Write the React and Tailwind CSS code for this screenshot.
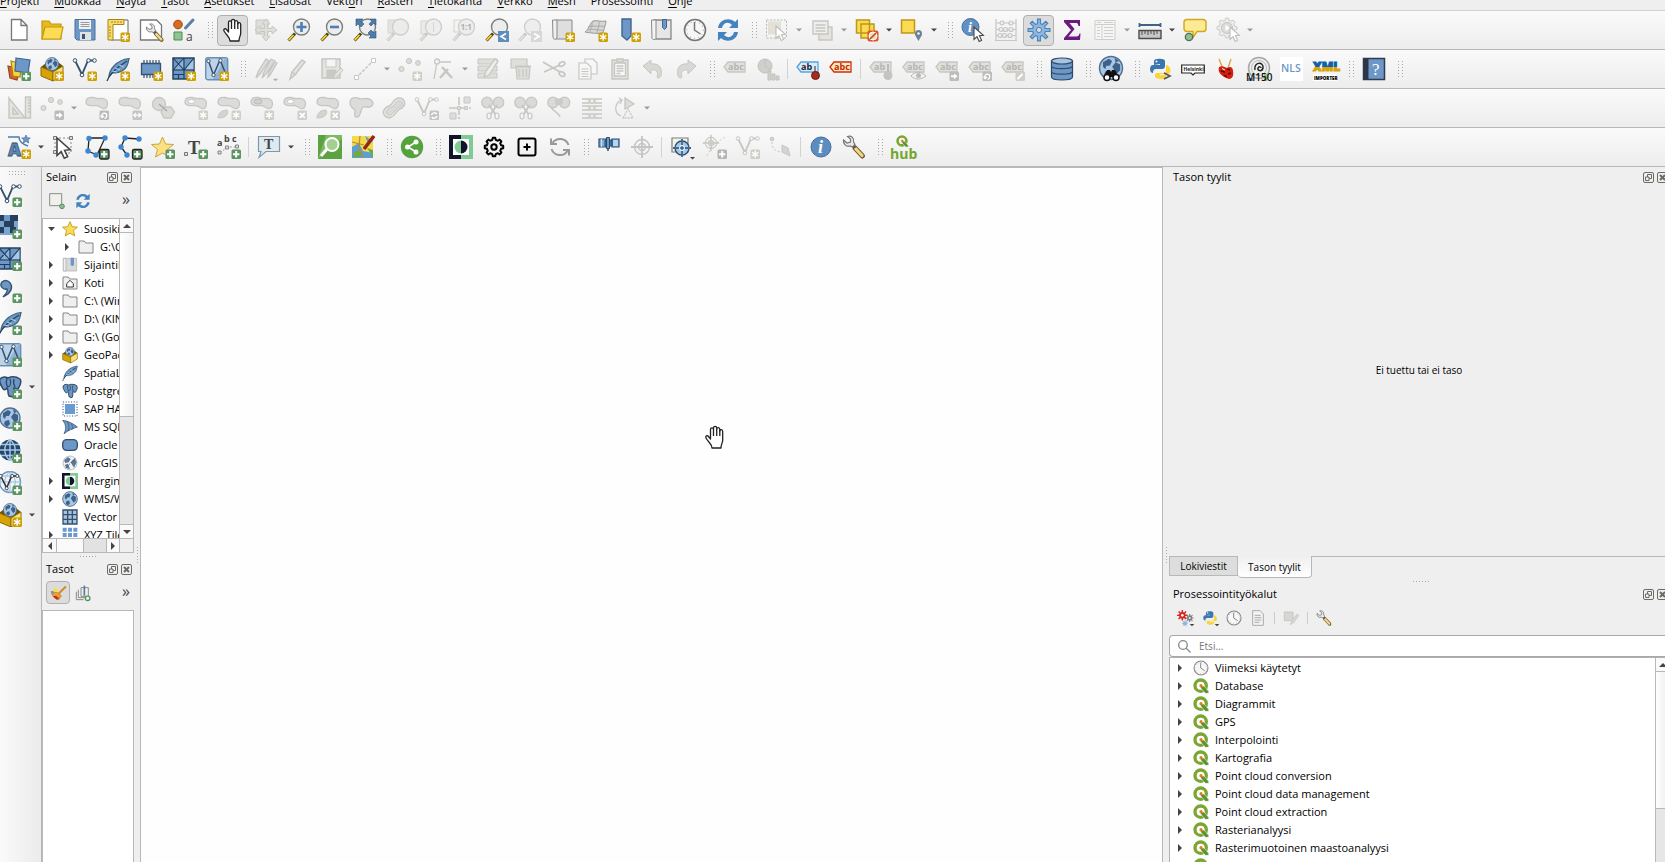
const BLUE = '#6c97c6'
const NAVY = '#33506e'
const OFF = '#c6c6c2'
const OFF_FILL = '#dfdedb'

function gearPath(cx, cy, teeth, outer, inner) {
  const pts = []
  for (let i = 0; i < teeth; i++) {
    const step = (Math.PI * 2) / teeth
    const a = i * step - Math.PI / 2
    const at = (r, o) => `${(cx + r * Math.cos(a + o * step)).toFixed(2)} ${(cy + r * Math.sin(a + o * step)).toFixed(2)}`
    pts.push(at(inner, -0.3), at(outer, -0.17), at(outer, 0.17), at(inner, 0.3))
  }
  return `M${pts.join('L')}Z`
}

/* ---------- badges ---------- */

function Badge({ fill, children }) {
  return (
    <g>
      <rect x="14.5" y="14.5" width="9.5" height="9.5" rx="1.5" fill={fill} />
      {children}
    </g>
  )
}

const Plus = ({ off }) => (
  <Badge fill={off ? '#b5b5b2' : '#5a9460'}>
    <path d="M19.2 16v6.4M16 19.2h6.4" stroke="#fff" strokeWidth="2" />
  </Badge>
)

const Star = ({ off }) => (
  <Badge fill={off ? '#cfcec6' : '#cf9f06'}>
    <path d="M19.2 15.6v7.2M16 17.4l6.4 3.6M16 21l6.4-3.6" stroke="#fff" strokeWidth="1.4" />
  </Badge>
)

const Arrow = () => (
  <Badge fill="#bcbcba">
    <path d="M16 18.3h3v-2l3.6 3-3.6 3v-2h-3z" fill="#fff" />
  </Badge>
)

const Turn = () => (
  <Badge fill="#bcbcba">
    <path d="M19.6 22.4c3-1 2.8-5 0-5.2-2.4 0-2.8 2-2.6 3.2M15.6 19.6l1.5 2 1.8-1.6" stroke="#fff" strokeWidth="1.3" fill="none" />
  </Badge>
)

const Cross = () => (
  <Badge fill="#cfcec9">
    <path d="M16.8 16.8l5 5M21.8 16.8l-5 5" stroke="#fff" strokeWidth="1.8" />
  </Badge>
)

/* ---------- shared shapes ---------- */

function Lens({ off, fill = '#ededed' }) {
  return (
    <g>
      <path d="M1.5 22.5L8 15.5" stroke={off ? OFF : '#4d4015'} strokeWidth="3" />
      <path d="M1.7 22.2L6.5 17" stroke={off ? '#e2dfd6' : '#f8d22a'} strokeWidth="1.8" />
      <circle cx="14.5" cy="9" r="8" fill={fill} stroke={off ? '#cfcfcd' : '#7b8079'} strokeWidth="1.4" />
    </g>
  )
}

const Blob = () => (
  <path
    d="M1 6C1 2 4 1 8 1.500c3 .5 4 1.500 7 1 4-.5 7.500 1 7.500 5s-2 5.500-4.500 5c-3-1-4-3-7-3S1 10.500 1 6z"
    fill="#dcdddb"
    stroke={OFF}
    strokeWidth="1.3"
  />
)

const Pointer = ({ x = 0, y = 0, off }) => (
  <path
    transform={`translate(${x} ${y})`}
    d="M0 0v12.5l3-2.8 2.2 4.8 2.4-1.2-2.2-4.5 4-.4z"
    fill="#fff"
    stroke={off ? '#bdbdba' : '#444'}
    strokeWidth="1.1"
  />
)

const Wrench = ({ x = 0, y = 0 }) => (
  <g transform={`translate(${x} ${y})`}>
    <path d="M12 13l7.500 8" stroke="#6c5b2b" strokeWidth="5" strokeLinecap="round" />
    <path d="M12.500 13.500l6.500 7" stroke="#f5d488" strokeWidth="3.2" strokeLinecap="round" />
    <path d="M10 10l2 3" stroke="#555" strokeWidth="3" />
    <path d="M4.5 1.500c4-1.500 7 2 6 5.500l1.5 2.500-2.5 2.500L7 11C3 12 0 9 .5 5l3.500 3L7.500 7 7.500 4z" fill="#e9e9e9" stroke="#777" strokeWidth="1.200" />
  </g>
)

const Nodes = ({ color = NAVY, dot = '#fff' }) => (
  <g stroke={color} fill={dot}>
    <path d="M2 3.5l7 14L15 3.500h6" fill="none" strokeWidth="1.800" />
    <circle cx="2" cy="3.500" r="1.800" />
    <circle cx="9" cy="18" r="1.800" />
    <circle cx="15.500" cy="3.500" r="1.800" />
    <circle cx="21.500" cy="3.500" r="1.800" />
  </g>
)

const Globe = ({ cx = 12, cy = 11, r = 10 }) => (
  <g transform={`translate(${cx} ${cy}) scale(${r / 10})`}>
    <circle r="10" fill="#a9c8e6" stroke="#54708f" strokeWidth="1.3" />
    <path d="M-7-5l5-3 3 2-2 4-3 0-1 3-2-2zM1-1l3-4 4 2 0 5-3 3-2-3zM-5 3l4-1 1 4-3 3-3-3zM3-9l4 3-3 1z" fill="#3d6189" />
  </g>
)

const Mesh = () => (
  <g>
    <rect x="1" y="1" width="21" height="21" fill={BLUE} stroke="#1f3b58" strokeWidth="1.4" />
    <path d="M13 12.500L21.500 2v10.500z" fill="#a9c8e6" />
    <path d="M1.500 12L11.500 1.500v11z" fill="#8db3da" />
    <path d="M1 1l11 12M12 1L1 13M1 13h21M12 1v21M12 13L22 1M1 17.500h11M6.500 17.500V22" stroke="#1f3b58" strokeWidth="1.1" fill="none" />
  </g>
)

const Feather = () => (
  <g>
    <path d="M3 20C3 13 10 3 23 1.500c-1 4-1 8-5 11-4 3.500-9 3.500-12 3.500z" fill={BLUE} stroke="#3f617f" strokeWidth="1.2" />
    <path d="M1 24c2-6 9-13 20-20" stroke="#24435f" strokeWidth="1.3" fill="none" />
    <path d="M9 11l5 2M6 14l5 1M13 8l5 2" stroke="#b4cfe9" strokeWidth="1" />
  </g>
)

const VectorTile = () => (
  <g>
    <rect x=".7" y=".7" width="22" height="22" rx="2" fill="#bdd3e8" stroke="#6b8fb3" strokeWidth="1.4" />
    <path d="M8 22L20 1h2v21z" fill="#8fb3d7" />
    <path d="M3.500 4l5 14L15 3l5 12" stroke="#33506e" strokeWidth="1.500" fill="none" />
    <g fill="#fff" stroke="#33506e"><circle cx="3.500" cy="4" r="1.700" /><circle cx="8.500" cy="18" r="1.700" /><circle cx="15.500" cy="3.500" r="1.700" /></g>
  </g>
)

const GeoBox = () => (
  <g>
    <path d="M1 10l5-4 12-1 5 4-10 6z" fill="#6b5206" />
    <Globe cx={12} cy={7} r={6.5} />
    <path d="M1 10l12 5v9L1 19z" fill="#d9a204" stroke="#8a6a0a" />
    <path d="M13 15l10-6v9l-10 6z" fill="#fbe375" stroke="#8a6a0a" />
  </g>
)

const Elephant = () => (
  <g>
    <path d="M2 4c3-3 6-2 8-1 4-2 9-1 12 1 2 3 0 7-2 10l-4-1c0 2 1 6-1 9l-4-1c-2-3 0-6-2-8-2 3-4 2-5-1C2 9 1 7 2 4z" fill={BLUE} stroke="#2f4a66" strokeWidth="1.5" />
    <path d="M9 3c-1 4-1 7 1 9 3-1 3-5 2-8M16 4c-1 3 0 6 1 8" stroke="#2f4a66" fill="none" strokeWidth="1.3" />
  </g>
)

const Label = ({ text = 'abc', stroke = OFF, fill = '#e1e0dd', color = '#b5b5b2' }) => (
  <g>
    <path d="M1 10l4-5h17v10H5z" fill={fill} stroke={stroke} strokeWidth="1.3" />
    <text x="5" y="13" fontSize="9" fontWeight="700" fill={color}>{text}</text>
  </g>
)

const Python = () => (
  <g>
    <path d="M6 8V4c0-3 11-3 11 0v5c0 2-1 3-3 3H8c-2 0-3 1-3 4-4 0-4-8 0-8h7V7z" fill="#3b77ae" />
    <path d="M18 8v5c0 2-1 3-3 3H9c-2 0-2 1-2 3 0 4 11 4 11 1v-2h-6v-1h8c4 0 3-9-2-9z" fill="#fbd43b" />
    <circle cx="8.5" cy="4.5" r="1" fill="#fff" />
  </g>
)

const Refresh = ({ color = '#4482c0' }) => (
  <g fill={color}>
    <path d="M2 10C3 1 14-1 19 4l3-3v9h-9l3-3c-4-4-9-2-10 3z" />
    <path d="M22 14c-1 9-12 11-17 6l-3 3v-9h9l-3 3c4 4 9 2 10-3z" />
  </g>
)

const Clock = ({ color = '#777' }) => (
  <g>
    <circle cx="12" cy="12" r="10.5" fill="#f7f7f7" stroke={color} strokeWidth="1.6" />
    <circle cx="12" cy="12" r="8.3" fill="none" stroke="#999" strokeWidth="1" strokeDasharray="1 3.3" />
    <path d="M11.5 4v8l6 4" stroke={color} strokeWidth="1.5" fill="none" />
  </g>
)

const QLogo = () => (
  <g>
    <circle cx="11.5" cy="11.5" r="8.5" fill="none" stroke="#7aa632" strokeWidth="5" />
    <path d="M11.5 12h5l7 8v3h-5l-7-8z" fill="#5b9232" stroke="#fff" strokeWidth=".8" />
    <circle cx="12" cy="11.5" r="2.4" fill="#ee7913" />
  </g>
)

const Sight = ({ color }) => (
  <g fill="none" stroke={color} strokeWidth="1.4">
    <circle cx="12" cy="12" r="7.5" />
    <circle cx="12" cy="12" r="3.5" />
    <path d="M12 1v22M1 12h22" strokeWidth="1.8" />
  </g>
)

const Scissors = () => (
  <g fill="#dadbd8" stroke={OFF} strokeWidth="1.2">
    <circle cx="6" cy="6.500" r="5.300" />
    <circle cx="17.500" cy="6.500" r="5.300" />
    <path d="M8 9l7 10M16 9L9 19" strokeWidth="1.8" />
    <ellipse cx="8" cy="20" rx="2" ry="3" fill="#f5f5f5" />
    <ellipse cx="16" cy="20" rx="2" ry="3" fill="#f5f5f5" />
  </g>
)

const Mergin = () => (
  <g>
    <path d="M0 0h24v24H0z" fill="#7fcb93" />
    <path d="M0 0h12v4H4v16h8v4H0z" fill="#11142b" />
    <path d="M4 4h16v16H4z" fill="#fff" />
    <path d="M12 5.5a6.5 6.5 0 0 0 0 13z" fill="#7fcb93" />
    <path d="M12 5.5a6.5 6.5 0 0 1 0 13z" fill="#11142b" />
  </g>
)

const Folder = () => (
  <path d="M1.5 3h8l2 3h11v15h-21z" fill="#efefef" stroke="#858585" strokeWidth="1.5" strokeLinejoin="round" />
)

// open hand: four finger tips, thumb on the left, flat wrist
const Hand = () => (
  <g fill="#fff" stroke="#222" strokeWidth="1.3" strokeLinejoin="round">
    <path d="M7.500 14V4.500c0-2.200 3-2.200 3 0V3c0-2.200 3.200-2.200 3.200 0v1c0-2 3.100-2 3.100.3V6c0-1.800 2.900-1.800 2.900.5V15c0 3-1.700 4-1.700 8H9c0-4-4-6-6-10-1-2 1.500-3 2.500-1.500z" />
    <path d="M10.500 4.500V11M13.700 4v7M16.800 5v6" fill="none" />
  </g>
)

const NodeDots = () => (
  <g fill="#dcdcda" stroke={OFF}><circle cx="11" cy="4" r="2.6" /><circle cx="3.5" cy="12" r="2.6" /><circle cx="20" cy="6" r="2.4" /></g>
)

/* ---------- icon table ---------- */

const ICONS = {
  newFile: <path d="M4.5 1.5h9.500l6 6v14.500h-15.500zM14 1.500v6h6" fill="#fff" stroke="#777" strokeWidth="1.3" />,
  open: <g stroke="#c39a0c" strokeWidth="1.2"><path d="M2 21V3h7l2 3h10v15z" fill="#e8b920" /><path d="M2 21L5 9h18l-2.5 12z" fill="#fcdc55" /></g>,
  save: <g><path d="M2 1.5h20V22H4l-2-2z" fill={BLUE} stroke="#4b7199" /><path d="M6 2h12v9H6z" fill="#f2f2f2" /><path d="M7.5 4.5h9M7.5 6.5h9M7.5 8.5h9" stroke="#999" /><path d="M7 14h11v8H7z" fill="#e2e2e2" /><path d="M9 16h3v5H9z" fill="#375777" /></g>,
  newLayout: <g><path d="M5 2h17v20H5z" fill="#fff" stroke="#666" /><path d="M2 1.5h16v5H7V22H2z" fill="#f8dd6c" stroke="#a88514" /><path d="M6 3v2M9 3v2M12 3v2M15 3v2M3 9h2M3 12h2M3 15h2M3 18h2" stroke="#a88514" /><Star /></g>,
  layoutManager: <g><path d="M1.5 2h16l5 5v15h-21z" fill="#fff" stroke="#777" strokeWidth="1.3" /><g transform="translate(7 5) scale(.8)"><Wrench /></g></g>,
  styleManager: <g><circle cx="6" cy="6.5" r="4.3" fill="#d96a20" stroke="#9a4512" /><path d="M13.5 10L21 2" stroke="#5c7fa6" strokeWidth="3" strokeLinecap="round" /><path d="M2 14h8v8H2z" fill="#8ec48f" stroke="#4d8a54" /><text x="14" y="22.5" fontSize="12" fill="#444">a</text></g>,
  hand: <Hand />,
  panSelection: <g stroke={OFF} fill={OFF_FILL}><path d="M2 2h12v14H2z" /><path d="M12 1l4 5h-2.500v4.500H18V8l5 4-5 4v-2.500h-4.500V18H16l-4 5-4-5h2.500v-4.500H6V16l-5-4 5-4v2.500h4.500V6H8z" /></g>,
  zoomIn: <g><Lens /><path d="M14.5 4v10M9.5 9h10" stroke="#4d7eb5" strokeWidth="2.6" /></g>,
  zoomOut: <g><Lens /><path d="M10 9h9" stroke="#4d7eb5" strokeWidth="2.6" /></g>,
  zoomFull: <g><Lens /><g fill="#4d7bab" stroke="#2f5379" strokeWidth=".6"><path d="M3 1h7L8 3l3 3-3 3-3-3-2 2zM23 1h-6l2 2-3 3 2 2 3-3 2 2zM23 20h-7l2-2-3-3 3-3 3 3 2-2z" /></g></g>,
  zoomSelection: <g><path d="M2 2h11v13H2z" fill="#e6e4de" stroke="#d6d4cf" /><Lens off fill="#ececeb" /></g>,
  zoomLayer: <g><path d="M2 3h11v13H2z" fill="#ecebe8" stroke="#d6d4cf" /><Lens off /><path d="M14.5 4v10" stroke="#d5d5d3" /></g>,
  zoomNative: <g><path d="M2 2h8v12H2z" fill="#f3f3f2" stroke="#d6d4cf" /><Lens off /><text x="8.5" y="12" fontSize="8" fontWeight="700" fill="#b0b0ae">1:1</text></g>,
  zoomLast: <g><Lens /><path d="M13 13h11v11H13z" fill="#5f8dbd" /><path d="M21 15.5l-5 3 5 3" stroke="#fff" strokeWidth="1.7" fill="none" /></g>,
  zoomNext: <g><Lens off /><path d="M13 13h11v11H13z" fill="#d8d8d6" /><path d="M16 15.5l5 3-5 3" stroke="#fff" strokeWidth="1.7" fill="none" /></g>,
  newMap: <g><path d="M5 2h16v19H5z" fill="#dedede" stroke="#888" /><path d="M1.5 2H6v17c0 3-4 3-4 0z" fill="#f0f0f0" stroke="#888" /><Star /></g>,
  new3d: <g><path d="M1 14c3-1 5-9 8-11 4-1 8 1 13 0 0 3-2 7-3 12-5 1-12 0-18-1z" fill="#d7d7d4" stroke="#999" /><path d="M4 9c5-2 11 0 17-1M8 4c1 3-2 8-2 10M15 4c1 3-2 8-2 11M3 12c6-2 12 1 17 0" stroke="#aaa" fill="none" /><Star /></g>,
  bookmark: <g><path d="M5 1h9v17l-4 4-5-4z" fill={BLUE} stroke="#3f668f" strokeWidth="1.4" /><Star /></g>,
  bookmarks: <g><path d="M4 2h17v19H4z" fill="#e6e6e6" stroke="#888" strokeWidth="1.3" /><path d="M1.5 2H6v18c0 2-4 2-4 0z" fill="#f3f3f3" stroke="#888" /><path d="M12.5 1.5h4v8l-2 2-2-2z" fill={BLUE} stroke="#3f668f" /></g>,
  clock: <Clock />,
  refresh: <Refresh />,
  select: <g><path d="M1.5 2h20v18h-20z" fill="#f4f4f3" stroke="#b8b8b6" strokeDasharray="2 1.5" /><path d="M3 3.5h13v13H3z" fill="#e4e0d8" /><Pointer x={11} y={8} off /></g>,
  selectValue: <g fill="#e6e3dc" stroke={OFF} strokeWidth="1.4"><path d="M9 9h13v13H9z" /><path d="M3 3h15v13H3z" fill="#efefed" /><path d="M5.500 7h10M5.500 10h10M5.500 13h10" /></g>,
  deselect: <g><path d="M1.5 2h13v13h-13zM6 6h13v14H6z" fill="#fbda54" stroke="#c09718" strokeWidth="1.5" /><rect x="12.5" y="12.5" width="11" height="11" rx="2" fill="#de5620" /><circle cx="18" cy="18" r="4" fill="#f7d9c0" stroke="#fff" /><path d="M15 21l6-6" stroke="#b54517" strokeWidth="1.5" /></g>,
  selectLocation: <g><path d="M1.5 2h13v13h-13z" fill="#fbda54" stroke="#c09718" strokeWidth="1.5" /><path d="M18.5 23c-2-4-3.5-5-3.5-7.500a3.500 3.500 0 0 1 7 0c0 2.500-1.500 3.500-3.500 7.500z" fill="#6a8296" /><circle cx="18.5" cy="15.5" r="1.2" fill="#fff" /></g>,
  identify: <g><circle cx="9.5" cy="9" r="8.5" fill="#6490c2" stroke="#436f9f" /><text x="7" y="14" fontSize="14" fontWeight="700" fontStyle="italic" fill="#fff" fontFamily="Liberation Serif">i</text><Pointer x={13} y={9} /></g>,
  abacus: <g stroke="#c5c5c3" fill="#f0f0ef" strokeWidth="1.2"><path d="M2 1v22M22 1v22M2 5h20M2 11.5h20M2 17.5h20M1 22.5h22" /><g><circle cx="8" cy="5" r="2" /><circle cx="17" cy="5" r="2" /><circle cx="7" cy="11.5" r="2" /><circle cx="11.5" cy="11.5" r="2" /><circle cx="17" cy="11.5" r="2" /><circle cx="6" cy="17.5" r="2" /><circle cx="10.5" cy="17.5" r="2" /><circle cx="16" cy="17.5" r="2" /></g></g>,
  gear: <g><path d={gearPath(12, 12, 8, 11, 6.5)} fill="#8fb7de" stroke="#4b83bd" strokeWidth="1.2" /><circle cx="12" cy="12" r="2.6" fill="#dcdcdc" stroke="#4b83bd" /></g>,
  sigma: <path d="M4 2h16v6h-1.5c-.5-2.5-1-3-3-3h-6l5 6-6 7.500h8c2 0 2.500-1 3-3H20.500L20 22H4v-2l7-8L4 4z" fill="#6c1a7d" />,
  table: <g stroke="#cfcfcd" fill="#f6f6f5"><path d="M2 2.500h20v19H2zM2 6.500h20M9 6.500v15" /><path d="M4 4.500h4M11 4.500h9M4 9.5h3M11 9.5h9M4 12.5h3M11 12.5h9M4 15.5h3M11 15.5h9M4 18.5h3M11 18.5h9" /></g>,
  measure: <g><path d="M2 7h20M1.5 5v4M22.5 5v4" stroke="#3f6286" strokeWidth="1.8" /><path d="M1 12.5h22v8H1z" fill="#c7c7c5" stroke="#4c4c4c" strokeWidth="1.4" /><path d="M4 13v4M7 13v3M10 13v4M13 13v3M16 13v4M19 13v3" stroke="#4c4c4c" /></g>,
  mapTips: <g><path d="M4 1.5h16c2 0 3 1 3 3v6c0 2-1 3-3 3h-6l-4 6v-6H4c-2 0-3-1-3-3v-6c0-2 1-3 3-3z" fill="#fcea94" stroke="#d2a71c" strokeWidth="1.4" /><circle cx="6" cy="19" r="3.7" fill="#8bc08d" stroke="#52705a" strokeWidth="1.3" /></g>,
  action: <g><path d={gearPath(11, 10, 8, 10, 8)} fill="#ededec" stroke="#cbcbc9" /><circle cx="11" cy="10" r="5.5" fill="#dcdcda" stroke="#c2c2c0" /><path d="M9.5 7l5 3-5 3z" fill="#fff" /><Pointer x={14} y={9} off /></g>,

  dataSource: <g strokeWidth="1.2"><path d="M1 9l12 3-3 11L3 21z" fill="#d9622b" stroke="#98441d" /><path d="M4 4l11 3-2 13L6 19z" fill="#f9d33f" stroke="#a88514" /><path d="M9 1l14 2-2 13-13-2z" fill={BLUE} stroke="#3f668f" /><Plus /></g>,
  geopackage: <g><GeoBox /><Star /></g>,
  newVector: <g><Nodes /><Star /></g>,
  newSpatialite: <g><Feather /><Star /></g>,
  memory: <g><path d="M5 3v4M8 3v4M11 3v4M14 3v4M17 3v4M20 3v4M5 17v4M8 17v4M11 17v4M14 17v4" stroke="#35526f" strokeWidth="1.2" /><path d="M2.5 6.5h19v11h-19z" fill={BLUE} stroke="#35526f" strokeWidth="1.3" /><Star /></g>,
  newMesh: <g><Mesh /><Star /></g>,
  newTile: <g><VectorTile /><Star /></g>,
  pencils: <g stroke={OFF} fill="#dcdcd9"><path d="M2 21l2-6L12 2l3 2-9 13zM8 21l2-6L17 2l4 2-9 13zM14 20l1-5 6-10 2 1-7 12z" strokeWidth="1.3" /><path d="M19.500 22h4l-2 2z" fill="#888" /></g>,
  pencil: <path d="M3 22l2-7L15 3l3 2L8 18zM5 15l3 3" fill="#e3e3e0" stroke={OFF} strokeWidth="1.5" />,
  saveEdits: <g stroke={OFF} fill="#e3e3e0"><path d="M2 2h18v19H2z" strokeWidth="1.5" /><path d="M6 2h10v8H6z" fill="#f5f5f5" /><path d="M7 13h9v8H7z" fill="#c8c8c5" /><path d="M13 22l2-5 6-6 2 2-6 7z" /></g>,
  addLine: <g stroke={OFF} fill="#fff"><path d="M3 21L21 3" strokeDasharray="3 1.5" strokeWidth="1.5" /><path d="M1.5 18.5h4v4h-4zM18.5 1.5h4v4h-4z" /></g>,
  addPoint: <g><NodeDots /><Star off /></g>,
  vertex: <g stroke={OFF} fill="#f5f5f5" strokeWidth="1.3"><path d="M3 22L6 5h14" fill="none" /><circle cx="6" cy="4.5" r="2.5" /><path d="M9 21l8-9M11 10l10 11" strokeWidth="2.5" /></g>,
  multiEdit: <g stroke={OFF} fill={OFF_FILL}><path d="M2 2h19v5H2zM2 9h19v5H2zM2 16h19v5H2z" /><path d="M8 20l2-6L19 2l3 2-9 14z" fill="#eee" strokeWidth="1.3" /></g>,
  trash: <g stroke={OFF} fill={OFF_FILL} strokeWidth="1.2"><path d="M2 2h16v9H2z" /><path d="M6 9h16M7 10l1 12h12l1-12zM10 12v8M14 12v8M17.5 12v8" /></g>,
  cut: <g stroke={OFF} fill="none" strokeWidth="1.7"><path d="M1 5l17 10M2 15L18 8" /><ellipse cx="20" cy="7" rx="3" ry="2" transform="rotate(-25 20 7)" /><ellipse cx="20" cy="17" rx="3" ry="2" transform="rotate(30 20 17)" /></g>,
  copy: <g stroke={OFF} fill="#f7f7f7" strokeWidth="1.2"><path d="M10 2h8l4 4v11H10z" /><path d="M4 6h8l4 4v12H4zM6.5 12h7M6.5 14.5h7M6.5 17h7M6.5 19.5h7" /></g>,
  paste: <g stroke={OFF} fill="#e4e2dd" strokeWidth="1.4"><path d="M4 3h16v19H4z" /><path d="M6.5 6h11v13h-11z" fill="#f8f8f8" /><path d="M9 2h6v3H9zM8.5 9h7M8.5 11.5h7M8.5 14h7M8.5 16.5h4" /></g>,
  undo: <path d="M2 9l8-6v4c7-1 12 3 10 12-1 2-3 3-4 1 2-5-1-8-6-7v4z" fill="#d8d8d5" stroke={OFF} />,
  redo: <path d="M22 9l-8-6v4C7 6 2 10 4 19c1 2 3 3 4 1-2-5 1-8 6-7v4z" fill="#d8d8d5" stroke={OFF} />,
  labelOff: <Label />,
  diagram: <g stroke="#c2c2bf" fill="#cfcfcc"><circle cx="9" cy="9" r="7" /><path d="M9 9V2M9 9l6 4" /><path d="M12 14h3v9h-3zM16 17h3v6h-3zM20 19h3v4h-3z" /></g>,
  labelPin: <g><Label text="ab" stroke="#5aa2df" fill="#d6ecfb" color="#223" /><path d="M19 9v7" stroke="#888" strokeWidth="2" /><circle cx="19.5" cy="18.5" r="4" fill="#a52d1b" stroke="#6d1c10" /></g>,
  labelRed: <Label stroke="#d02c10" fill="#fbeeb8" color="#c4230c" />,
  labelPinOff: <g><Label text="ab" /><path d="M19 7v8" stroke="#bbb" strokeWidth="2" /><circle cx="19" cy="18.5" r="4.5" fill="#c4c4c2" /></g>,
  labelShow: <g><Label /><path d="M9 19c4-5 10-5 15 0-5 4-11 4-15 0z" fill="#f2f2f1" stroke="#b9b9b7" /><circle cx="16.5" cy="18.5" r="2.5" fill="#bbb" /></g>,
  labelMove: <g><Label /><Arrow /></g>,
  labelTurn: <g><Label /><Turn /></g>,
  labelEdit: <g><Label /><Badge fill="#cfcec9"><path d="M16.5 22l5-5" stroke="#fff" strokeWidth="2" /></Badge></g>,
  database: <g stroke="#2f4a66" fill={BLUE} strokeWidth="1.2"><path d="M1.5 4v16c0 4 21 4 21 0V4z" /><path d="M1.5 9c0 3.5 21 3.5 21 0M1.5 14.5c0 3.5 21 3.5 21 0" fill="none" /><ellipse cx="12" cy="4" rx="10.5" ry="3" fill="#a5c4e3" /></g>,
  metasearch: <g><Globe cx={12} cy={11} r={11.5} /><path d="M5 20l3-7h3l1 2 1-2h3l4 7z" fill="#111" /><circle cx="8" cy="20.5" r="3" fill="#fff" stroke="#111" strokeWidth="1.5" /><circle cx="17" cy="20.5" r="3" fill="#fff" stroke="#111" strokeWidth="1.5" /></g>,
  python: <g><Python /><path d="M16 16l6 3-6 3" stroke="#555" strokeWidth="1.7" fill="none" /></g>,
  helsinki: <g><path d="M.7 8h22.6v8H14l-2 2-2-2H.7z" fill="#fff" stroke="#222" strokeWidth="1.2" /><text x="2.500" y="14" fontSize="5" fontWeight="700" fill="#222">Helsinki</text></g>,
  cherry: <g><path d="M5 2l4 10M17 2l-4 12" stroke="#dba64f" strokeWidth="1.4" /><path d="M5 10c3-2 6 0 8 1 3-2 6-1 6 3 1 5-1 8-4 8-6-2-12-6-10-12z" fill="#d3200e" /><path d="M7 14l4 1M14 17l3-1M10 18l3 2M13 12l3 1" stroke="#5c0e06" strokeWidth="1.5" /><path d="M8 11.5l3 1.5" stroke="#fff" /></g>,
  m150: <g><circle cx="12" cy="11" r="10.5" fill="#ecefeb" stroke="#a5aaa5" strokeWidth="1.5" /><circle cx="12" cy="11" r="7.5" fill="none" stroke="#bbb" /><path d="M8 13c-2-8 9-9 8-2-1 4-6 3-5 0 1-2 3-1 3 0" stroke="#222" strokeWidth="1.5" fill="none" /><path d="M1 21h5v3H1z" fill="#6f93cc" /><path d="M17 16l5 3-2 5h-3z" fill="#8bc47c" /><text x="-1" y="23.5" fontSize="10" fontWeight="600" fill="#111">M150</text></g>,
  nls: <g><path d="M0 0h23v24H0z" fill="#fff" /><text x="1" y="15" fontSize="10.5" fontWeight="600" fill={BLUE}>NLS</text></g>,
  xml: <g><defs><linearGradient id="xmlFill" x1="0" y1="0" x2="0" y2="1"><stop offset=".55" stopColor="#0e60ad" /><stop offset=".55" stopColor="#d6a407" /></linearGradient></defs><path d="M0 17h24v7H0z" fill="#fff" /><text x="0" y="14" fontSize="12" fontWeight="800" fill="url(#xmlFill)" stroke="url(#xmlFill)">XML</text><text x="1" y="22.5" fontSize="4.5" fontWeight="800" fill="#000">IMPORTER</text></g>,
  help: <g><path d="M1.5 1.5h21v21h-21z" fill={BLUE} stroke="#2f3c50" strokeWidth="1.5" /><path d="M1.5 1.5h5v21h-5z" fill="#2d3648" /><text x="10" y="17.5" fontSize="17" fill="#fff" fontFamily="Liberation Serif">?</text></g>,

  advDigitize: <g fill="#e5e4df" stroke={OFF} strokeWidth="1.4"><path d="M2 2v20h16zM6 12v6h5z" /><path d="M18.5 1h5v21h-5zM21 4h2M21 7h2M21 10h2M21 13h2M21 16h2" /></g>,
  moveFeature: <g><NodeDots /><Arrow /></g>,
  rotate: <g><Blob /><Turn /></g>,
  scale: <g><Blob /><Badge fill="#c4c4c2"><path d="M16 19.2h6.5M18 17l-2.2 2.2 2.2 2.2M20.5 17l2.2 2.2-2.2 2.2" stroke="#fff" strokeWidth="1.2" fill="none" /></Badge></g>,
  simplify: <g fill="#dadbd8" stroke={OFF} strokeWidth="1.3"><circle cx="8" cy="8" r="6.5" /><path d="M13 11h7l3.5 5-3.5 6h-7l-3-6z" /><path d="M8 8l8 7" stroke="#aaa" strokeWidth="1.5" /></g>,
  addRing: <g><Blob /><ellipse cx="7.5" cy="5.500" rx="3.500" ry="2" fill="#fff" stroke={OFF} /><Star off /></g>,
  addPart: <g><Blob /><path d="M1 22c0-5 4-8 9-8 2 3 0 8-9 8z" fill="#d3d3d0" stroke={OFF} /><Star off /></g>,
  fillRing: <g><Blob /><ellipse cx="8" cy="5.500" rx="4" ry="2.500" fill="#d0d0cd" stroke="#bbb" /><Star off /></g>,
  deleteRing: <g><Blob /><ellipse cx="7.5" cy="5.500" rx="3.500" ry="2" fill="#fff" stroke={OFF} /><Cross /></g>,
  deletePart: <g><Blob /><path d="M1 22c0-5 4-8 9-8 2 3 0 8-9 8z" fill="#d3d3d0" stroke={OFF} /><Cross /></g>,
  reshape: <path d="M1 7c0-6 6-6 9-4.500s8-2 12 1.500 1 8-4 7-5 1-6 4-2 7-5 6 0-6-1-7-5-3-5-7z" fill="#dcdddb" stroke={OFF} strokeWidth="1.4" />,
  offset: <g fill="none" stroke={OFF}><path d="M3 20c-4-4 0-9 4-10s4-8 10-8 7 6 4 9-4 1-7 6-8 6-11 3z" fill="#e4e4e1" strokeWidth="1.4" /><path d="M5 18c-2-3 1-6 5-7s3-6 7-6 4 4 2 5-5 3-7 6-5 4-7 2z" fill="#dadbd8" /></g>,
  reverse: <g><Nodes color={OFF} dot="#f5f5f5" /><Badge fill="#c4c4c2"><path d="M16.5 19a3 3 0 0 1 5.3-1M22 20a3 3 0 0 1-5.3 1" stroke="#fff" strokeWidth="1.4" fill="none" /></Badge></g>,
  trim: <g stroke={OFF} fill="#ddd"><path d="M11 1v22M1 12h22" strokeWidth="1.6" strokeDasharray="8 2" /><path d="M9.5 10.5h3v3h-3zM16.5 10.5h3v3h-3zM16 1h6v6h-6zM2 17h6v6H2z" /></g>,
  split: <Scissors />,
  splitParts: <Scissors />,
  merge: <g fill="#dadbd8" stroke={OFF} strokeWidth="1.2"><circle cx="6" cy="6.500" r="5.300" /><circle cx="17.500" cy="6.500" r="5.300" /><path d="M9 3h6v5H9z" fill="#ccc" /><path d="M4 11c2 5 8 5 9 10" fill="none" strokeWidth="1.500" /></g>,
  mergeAttr: <g stroke={OFF} fill="#e8e8e6"><path d="M2 3h20M2 7h20M2 10h20M2 14h20M2 18h20M2 22h20" strokeWidth="1.3" /><path d="M7 3l4 2-4 2M17 3l-4 2 4 2M7 10l4 2-4 2M17 10l-4 2 4 2M7 18l4 2-4 2M17 18l-4 2 4 2" /></g>,
  rotateSymbols: <g fill="none" stroke={OFF} strokeWidth="1.3"><path d="M12 2v11l9-5z" fill="#ddd" /><path d="M8 4C0 9 2 18 8 20M6 2l3 2-2 4" /><path d="M10 22l5-9 5 9z" strokeDasharray="2 1" /></g>,

  annotation: <g><path d="M1 2h11c0 6 6 8 9 9" stroke="#4d7bab" strokeWidth="1.4" fill="none" /><path d="M19 0l1.3 2.8 3 .2-2.3 2 .8 3-2.8-1.6-2.8 1.6.8-3-2.3-2 3-.2z" fill={BLUE} stroke="#3f668f" strokeWidth=".6" /><text x="1" y="21" fontSize="18" fontWeight="800" fill="#5b87b8" stroke="#33506e" strokeWidth=".8">A</text><Star /></g>,
  modifyAnnotation: <g><path d="M3 3h16v15H3z" fill="none" stroke="#888" strokeDasharray="2 2" /><path d="M1.5 1.5h3v3h-3zM17.5 1.5h3v3h-3zM1.5 15.5h3v3h-3z" fill="#ddd" stroke="#777" /><g transform="translate(5 3) scale(1.4)"><Pointer /></g></g>,
  addPolygon: <g stroke="#222" strokeWidth="1.3"><path d="M4 3l16 0-8 17-9-4z" fill="none" /><g fill="#3d87d5" stroke="none"><circle cx="4" cy="3.5" r="2.7" /><circle cx="20" cy="3" r="2.7" /><circle cx="3" cy="16" r="2.7" /><circle cx="11" cy="20" r="2.7" /></g><Plus /></g>,
  addPolyline: <g stroke="#222" strokeWidth="1.3"><path d="M21 4L7 3 3 12l6 8" fill="none" /><g fill="#3d87d5" stroke="none"><circle cx="7" cy="3" r="2.7" /><circle cx="21" cy="4" r="2.7" /><circle cx="3" cy="12" r="2.7" /><circle cx="9" cy="20" r="2.7" /></g><Plus /></g>,
  addMarker: <g><path d="M11.5 2l3 7 8 .5-6 5 2 7.500-7-4-7 4 2-7.500-6-5 8-.5z" fill="#fbe084" stroke="#cda640" /><Plus /></g>,
  addText: <g><text x="4" y="18.5" fontSize="18" fontWeight="700" fill="#444" fontFamily="Liberation Serif">T</text><path d="M.5 17.5h3v3h-3z" fill="#ddd" stroke="#777" /><Plus /></g>,
  addTextLine: <g><g fontSize="9" fontWeight="700" fill="#444"><text x="0" y="11">a</text><text x="7" y="7">b</text><text x="15" y="7">c</text></g><path d="M3 18l7-6h10" stroke="#999" strokeDasharray="2 2" fill="none" /><path d="M1 16h3v3H1zM8.5 11h3v3h-3zM18.5 10h3v3h-3z" fill="#ddd" stroke="#888" /><Plus /></g>,
  textBalloon: <g><path d="M1.5 1.5h21v15H9l-7 6 2-6H1.500z" fill="#dfe9f0" stroke="#7c99ae" strokeWidth="1.2" /><text x="7" y="14" fontSize="14" fontWeight="700" fill="#444" fontFamily="Liberation Serif">T</text></g>,
  quickSearch: <g><path d="M0 0h24v24H0z" fill="#5aa340" /><path d="M0 24L24 4V0H8z" fill="#7dbb62" /><circle cx="14" cy="9.5" r="6.5" fill="#a4cf92" stroke="#fff" strokeWidth="2" /><path d="M9 14l-6 7" stroke="#fff" strokeWidth="3" /></g>,
  osm: <g><path d="M1 1h21v22H1z" fill="#f4d94b" /><path d="M1 12l7-4 4 8 10 2v5H1zM14 1l3 7 5-2" fill="#5b9fd6" /><path d="M9 1l-1 11 4 11M1 7l12 3" stroke="#b98a34" strokeWidth="1.2" fill="none" /><path d="M3 17l5-2 3 7H2zM16 13l6 2v7z" fill="#71ab3c" /><path d="M13 14L23 1" stroke="#912617" strokeWidth="3.5" /></g>,
  share: <g><circle cx="12" cy="12" r="11.2" fill="#55a33c" /><path d="M16 7l-8 5 8 5" stroke="#fff" strokeWidth="1.6" fill="none" /><g fill="#fff"><circle cx="16" cy="7" r="2.5" /><circle cx="7.5" cy="12" r="2.5" /><circle cx="16" cy="17" r="2.5" /></g></g>,
  mergin: <Mergin />,
  cog: <g fill="none" stroke="#000" strokeWidth="2" strokeLinejoin="round"><path d={gearPath(12, 12, 8, 9.3, 7.3)} /><circle cx="12" cy="12" r="2.7" /></g>,
  plusBox: <g fill="none" stroke="#000" strokeWidth="2"><rect x="3.5" y="3.5" width="17" height="17" rx="2" /><path d="M12 8.500v7M8.500 12h7" /></g>,
  sync: <g fill="none" stroke="#999" strokeWidth="2"><path d="M20.5 10a9 9 0 0 0-16-2M3.5 14a9 9 0 0 0 16 2M3 3.5V9h6M21 20.5V15h-6" /></g>,
  gps: <g stroke="#2d4c6c"><path d="M2 4h7v8H2zM15 4h7v8h-7z" fill="#7fb0dd" strokeWidth="1.2" /><path d="M16 5h5v6h-5z" fill="#b6d5ef" stroke="none" /><path d="M4.500 4v8" stroke="#cde" /><path d="M8 5h7v6H8z" fill="#3f73a8" /><path d="M9.500 2.500h3v11h-3z" fill={BLUE} /><path d="M11 13v3" strokeWidth="1.5" /></g>,
  recenter: <Sight color="#c4c4c2" />,
  gpsCenter: <g><path d="M2 3h16v14H2z" fill="#f2f3ef" stroke="#7c8276" strokeWidth="1.2" /><circle cx="12" cy="13" r="7" fill="#a9c8e6" stroke="#2f4a66" strokeWidth="1.3" /><path d="M12 4v18M3 13h18" stroke="#3d6a9c" strokeWidth="1.8" /><circle cx="12" cy="13" r="2.5" fill="none" stroke="#fff" /><path d="M20 22h5l-2.5 2.5z" fill="#444" /></g>,
  gpsAdd: <g><g transform="translate(-1 -1) scale(.75)"><Sight color={OFF} /></g><path d="M10 10l12-8M9 12L3 22" stroke={OFF} strokeDasharray="2 2" /><Plus off /></g>,
  gpsVertex: <g><Nodes color={OFF} dot="#f5f5f5" /><Star off /></g>,
  gpsTrack: <g stroke={OFF} fill="#d3d3d0"><path d="M3 3v5c0 6 4 8 8 9" fill="none" strokeDasharray="2 2" /><circle cx="3" cy="4" r="1.8" /><path d="M13 10l6 3 2 8-8-4z" /></g>,
  info: <g><circle cx="12" cy="12" r="10" fill="#5d8cc0" stroke="#436f9f" /><text x="9" y="18" fontSize="18" fontWeight="700" fontStyle="italic" fill="#fff" fontFamily="Liberation Serif">i</text></g>,
  wrench: <Wrench x={1} />,
  qhub: <g><g transform="translate(5 0) scale(.52)"><QLogo /></g><text x="-1" y="23.5" fontSize="14" fontWeight="700" fill="#74a52f">hub</text></g>,

  addVector: <g><Nodes /><Plus /></g>,
  addRaster: <g><path d="M0 0h20v20H0z" fill="#7ba3cf" /><path d="M0 0h6v6H0zM12 0h8v6h-4v6h-4zM6 6h6v6H6zM0 12h6v6H0zM12 12h6v6h-6z" fill="#25405f" /><path d="M6 0h6v6H6z" fill={BLUE} /><Plus /></g>,
  addMesh: <g><Mesh /><Plus /></g>,
  addText2: <g><path d="M4 3c6-5 14 4 6 12l-5 3c4-4 5-6 4-8-4 1-8-3-5-7z" fill={BLUE} stroke="#35526f" strokeWidth="1.4" /><Plus /></g>,
  addSpatialite: <g><Feather /><Plus /></g>,
  addTile: <g><VectorTile /><Plus /></g>,
  addPostgis: <g><Elephant /><Plus /></g>,
  addWms: <g><Globe /><Plus /></g>,
  addXyz: <g><circle cx="12" cy="11" r="10.5" fill="#24476c" /><path d="M1.5 11h21M3 5.5h18M3 16.5h18M12 .5v21M12 .5c-7 6-7 15 0 21M12 .5c7 6 7 15 0 21" stroke="#a9c8e6" strokeWidth="1.4" fill="none" /><Plus /></g>,
  addWfs: <g><circle cx="12" cy="11" r="10.5" fill="#eef4fa" stroke="#6c97c6" strokeWidth="1.4" /><path d="M1.5 11h21M4 5h16M12 .5v21M12 .5c-7 6-7 15 0 21M12 .5c7 6 7 15 0 21" stroke="#9bbad9" fill="none" /><g transform="translate(1 2) scale(.85)"><Nodes color="#333" /></g><Plus /></g>,

  addSelected: <g><path d="M1 1h18v18H1z" fill="#f0f1ed" stroke="#888d80" strokeWidth="1.5" /><circle cx="19.500" cy="20" r="3.5" fill="#8bc08d" stroke="#52805a" strokeWidth="1.3" /></g>,
  star: <path d="M12 1l3.2 7.5 8 .7-6 5.2 2 8-7.2-4.2-7.2 4.2 2-8-6-5.2 8-.7z" fill="#fcdc55" stroke="#c09718" strokeWidth="1.3" />,
  folder: <Folder />,
  spatialBookmarks: <g><path d="M2 2h20v19H2z" fill="#d9d9d9" stroke="#aaa" /><path d="M2 2h4v19H2z" fill="#eee" stroke="#aaa" /><path d="M13 1h5v11l-2.5 2L13 12z" fill={BLUE} /></g>,
  home: <g><Folder /><path d="M7 13l5-5 5 5v5H7z" fill="#fff" stroke="#333" strokeWidth="1.5" /></g>,
  geobox: <GeoBox />,
  feather: <Feather />,
  elephant: <Elephant />,
  hana: <g><path d="M1.5 1.5h21v21h-21z" fill="none" stroke="#33506e" strokeWidth="1.6" strokeDasharray="1.5 2.5" /><path d="M4.5 4.5h15v15h-15z" fill="#6a9ad0" /></g>,
  mssql: <path d="M1 2c8 1 16 5 22 10-6 2-14 5-20 10C7 15 6 8 1 2zM8 4c3 5 3 10 1 14M14 7c2 3 2 6 1 9" fill={BLUE} stroke="#41607f" strokeWidth="1.3" />,
  oracle: <rect x="1" y="4" width="22" height="16" rx="6" fill={BLUE} stroke="#33506e" strokeWidth="2" />,
  arcgis: <g><circle cx="12" cy="12" r="10.5" fill="#eef2f6" stroke="#8ba4bd" /><path d="M3 8l6-5 4 3-3 5-5 1zM13 11l6-6 3 6-4 8zM4 15l5-2 3 8-5-1z" fill="#5d7791" /><path d="M5 20L20 5" stroke="#222" strokeDasharray="2 2" /></g>,
  wms: <Globe cy={12} r={11} />,
  vectorTiles: <g><path d="M1.5 1.5h21v21h-21z" fill="#a9c4df" /><path d="M1.5 1.5h21v21h-21zM8.5 1v22M15.5 1v22M1 8.5h22M1 15.5h22" fill="none" stroke="#33506e" strokeWidth="2" /></g>,
  xyz: <path d="M1 1h6v6H1zM9 1h6v6H9zM17 1h6v6h-6zM1 9h6v6H1zM9 9h6v6H9zM17 9h6v6h-6zM1 17h6v6H1zM9 17h6v6H9zM17 17h6v6h-6z" fill="#6a9ad0" />,
  brush: <g><path d="M14 12l9-9" stroke="#d58a27" strokeWidth="3" strokeLinecap="round" /><path d="M2 10l9 1 6 5-4 6C7 21 2 15 2 10z" fill="#e8a03a" stroke="#b96e1d" /><path d="M4 17l6 5 4-2-5-4z" fill="#cf2d12" /><path d="M1 9l5 1v3H3z" fill="#6c97c6" /><path d="M5 4l8 3-2 4-5-1z" fill="#fbdc4d" /></g>,
  addGroup: <g fill="none" stroke="#888d80" strokeWidth="1.5"><path d="M2 10v12h11M5 7v12h10M9 4h11v13H9z" /><path d="M14 1v15" stroke="#4d7bab" strokeWidth="2.5" /><circle cx="19" cy="20" r="3.5" fill="#dff0df" stroke="#52905a" strokeWidth="1.8" /></g>,
  q: <QLogo />,
  clockGrey: <Clock color="#888" />,
  models: <g><path d={gearPath(8, 8, 8, 8, 5)} fill="#d5281a" /><circle cx="8" cy="8" r="2" fill="#fff" /><path d={gearPath(19, 12, 8, 6, 4)} fill="#808080" /><circle cx="19" cy="12" r="1.5" fill="#eee" /><path d={gearPath(12, 20, 8, 4.5, 3)} fill="#8fb7de" /><path d="M19 21h7l-3.500 3.500z" fill="#444" /></g>,
  pythonSmall: <g><Python /><path d="M19 21h7l-3.500 3.500z" fill="#444" /></g>,
  results: <g fill="#f2f2f1" stroke="#aaa" strokeWidth="1.5"><path d="M4 1h11l5 5v17H4z" /><path d="M7 8h9M7 11.5h10M7 15h10M7 18.5h7" /></g>,
  editInPlace: <g fill="#d6d6d2" stroke={OFF}><path d="M2 3h13v13H2z" strokeWidth="1.4" /><path d="M11 22l2-6 8-10 3 2-8 11z" /></g>,
}

function Icon({ name, className = 'size-6' }) {
  return (
    <svg viewBox="0 0 24 24" className={`${className} shrink-0 overflow-visible`} aria-hidden="true">
      {ICONS[name]}
    </svg>
  )
}

/* ---------- toolbars ---------- */

const HANDLE = '|'
const SEP = '-'

// "+" adds a drop-down arrow, "*" marks a checked tool, "~" a disabled arrow
const TOOLBARS = [
  ['newFile', 'open', 'save', 'newLayout', 'layoutManager', 'styleManager', HANDLE,
    'hand*', 'panSelection', 'zoomIn', 'zoomOut', 'zoomFull', 'zoomSelection', 'zoomLayer', 'zoomNative', 'zoomLast', 'zoomNext',
    'newMap', 'new3d', 'bookmark', 'bookmarks', 'clock', 'refresh', HANDLE,
    'select~', 'selectValue~', 'deselect+', 'selectLocation+', HANDLE,
    'identify', 'abacus', 'gear*', 'sigma', 'table~', 'measure+', 'mapTips', 'action~'],
  ['dataSource', 'geopackage', 'newVector', 'newSpatialite', 'memory', 'newMesh', 'newTile', HANDLE,
    'pencils', 'pencil', 'saveEdits', 'addLine~', 'addPoint', 'vertex~', 'multiEdit', 'trash', 'cut', 'copy', 'paste', 'undo', 'redo', HANDLE,
    'labelOff', 'diagram', SEP, 'labelPin', 'labelRed', SEP, 'labelPinOff', 'labelShow', 'labelMove', 'labelTurn', 'labelEdit', HANDLE,
    'database', HANDLE, 'metasearch', HANDLE, 'python', 'helsinki', 'cherry', 'm150', 'nls', 'xml', HANDLE, 'help', HANDLE],
  ['advDigitize', 'moveFeature~', 'rotate', 'scale', 'simplify', 'addRing', 'addPart', 'fillRing', 'deleteRing', 'deletePart',
    'reshape', 'offset', 'reverse', 'trim', 'split', 'splitParts', 'merge', 'mergeAttr', 'rotateSymbols~'],
  ['annotation+', 'modifyAnnotation', 'addPolygon', 'addPolyline', 'addMarker', 'addText', 'addTextLine', SEP, 'textBalloon+', HANDLE,
    'quickSearch', 'osm', HANDLE, 'share', HANDLE, 'mergin', 'cog', 'plusBox', 'sync', HANDLE,
    'gps', 'recenter', SEP, 'gpsCenter', 'gpsAdd', 'gpsVertex', 'gpsTrack', SEP, 'info', 'wrench', HANDLE, 'qhub'],
]

function Caret({ off }) {
  return (
    <svg viewBox="0 0 6 4" className="w-[6px] h-[4px]" aria-hidden="true">
      <path d="M0 .5h6L3 3.5z" fill={off ? '#9a9a9a' : '#444'} />
    </svg>
  )
}

// rows of single-pixel dots
function GripV() {
  return (
    <svg viewBox="0 0 5 17" className="w-[5px] h-[17px]" stroke="#a8a8a8" strokeDasharray="1 2" aria-hidden="true">
      <path d="M.5 0v17M4.5 0v17" />
    </svg>
  )
}

function SplitGrip({ vertical }) {
  return vertical ? (
    <svg viewBox="0 0 1 16" className="w-px h-4" stroke="#a8a8a8" strokeDasharray="1 2"><path d="M.5 0v16" /></svg>
  ) : (
    <svg viewBox="0 0 16 1" className="w-4 h-px" stroke="#a8a8a8" strokeDasharray="1 2"><path d="M0 .5h16" /></svg>
  )
}

function ToolButton({ item }) {
  if (item === HANDLE) return <div className="w-4 flex justify-center pl-1"><GripV /></div>
  if (item === SEP) return <div className="w-[7px] flex justify-center"><div className="w-px h-5 bg-[#d2d2d2]" /></div>

  const name = item.replace(/[+*~]$/, '')
  const checked = item.endsWith('*')
  const off = item.endsWith('~')
  return (
    <div className="flex items-center shrink-0">
      <div className="w-[33px] flex justify-center">
        <button
          type="button"
          aria-label={name}
          className={`w-[31px] h-[31px] flex items-center justify-center rounded-sm ${checked ? 'bg-[#dcdcdc] border border-[#b0b0b0]' : ''}`}
        >
          <Icon name={name} />
        </button>
      </div>
      {(off || item.endsWith('+')) && (
        <button type="button" aria-label={`${name} menu`} className="w-3 h-[31px] flex items-center justify-center">
          <Caret off={off} />
        </button>
      )}
    </div>
  )
}

const MENU = [
  ['', 'P', 'rojekti'], ['', 'M', 'uokkaa'], ['', 'N', 'äytä'], ['', 'T', 'asot'], ['', 'A', 'setukset'],
  ['', 'L', 'isäosat'], ['Vekt', 'o', 'ri'], ['', 'R', 'asteri'], ['', 'T', 'ietokanta'], ['', 'V', 'erkko'],
  ['', 'M', 'esh'], ['Prosessointi', '', ''], ['', 'O', 'hje'],
]

const SIDE_TOOLS = ['addVector', 'addRaster', 'addMesh', 'addText2', 'addSpatialite', 'addTile', 'addPostgis+', 'addWms', 'addXyz', 'addWfs', 'geopackage+']

/* ---------- docks ---------- */

function DockButton({ kind }) {
  return (
    <button type="button" aria-label={kind} className="w-[11px] h-[11px] shrink-0">
      <svg viewBox="0 0 11 11" className="w-[11px] h-[11px]" fill="none" stroke="#6b6b66">
        <rect x=".5" y=".5" width="10" height="10" rx="1.5" />
        {kind === 'close'
          ? <path d="M3 3l5 5M8 3l-5 5" strokeWidth="2" />
          : <path d="M2.5 5h3.5v3.500H2.500zM4.500 5V2.500H8.500V6.500H6" />}
      </svg>
    </button>
  )
}

function DockTitle({ children, clipped }) {
  return (
    <div className="h-5 shrink-0 flex items-center gap-[3px] pl-1">
      <h2 className="flex-1 text-[11px] leading-4 font-normal">{children}</h2>
      <DockButton kind="float" />
      <div className={`flex overflow-hidden ${clipped ? 'w-2' : 'mr-[2px]'}`}>
        <DockButton kind="close" />
      </div>
    </div>
  )
}

function TreeArrow({ open }) {
  return (
    <svg viewBox="0 0 8 8" className="size-2 shrink-0" aria-hidden="true">
      <path d={open ? 'M1 2h7L4.5 6z' : 'M2 0l4 4-4 4z'} fill="#444" />
    </svg>
  )
}

const BROWSER = [
  { icon: 'star', label: 'Suosikit', open: true },
  { icon: 'folder', label: 'G:\\Oma', child: true, arrow: true },
  { icon: 'spatialBookmarks', label: 'Sijaintikirjanmerkit', arrow: true },
  { icon: 'home', label: 'Koti', arrow: true },
  { icon: 'folder', label: 'C:\\ (Windows)', arrow: true },
  { icon: 'folder', label: 'D:\\ (KINGSTON)', arrow: true },
  { icon: 'folder', label: 'G:\\ (Google Drive)', arrow: true },
  { icon: 'geobox', label: 'GeoPackage', arrow: true },
  { icon: 'feather', label: 'SpatiaLite' },
  { icon: 'elephant', label: 'PostgreSQL' },
  { icon: 'hana', label: 'SAP HANA' },
  { icon: 'mssql', label: 'MS SQL Server' },
  { icon: 'oracle', label: 'Oracle' },
  { icon: 'arcgis', label: 'ArcGIS REST Servers' },
  { icon: 'mergin', label: 'Mergin Maps', arrow: true },
  { icon: 'wms', label: 'WMS/WMTS', arrow: true },
  { icon: 'vectorTiles', label: 'Vector Tiles' },
  { icon: 'xyz', label: 'XYZ Tiles', arrow: true },
]

const ALGORITHMS = [
  'Database', 'Diagrammit', 'GPS', 'Interpolointi', 'Kartografia', 'Point cloud conversion',
  'Point cloud data management', 'Point cloud extraction', 'Rasterianalyysi',
  'Rasterimuotoinen maastoanalyysi', 'Rasterin luonti',
]

function ScrollArrow({ d, label, className }) {
  return (
    <button type="button" aria-label={label} className={`shrink-0 flex items-center justify-center bg-[#fafafa] border-[#b8b8b8] ${className}`}>
      <svg viewBox="0 0 8 8" className="size-2 shrink-0"><path d={d} fill="#444" /></svg>
    </button>
  )
}

function BrowserPanel() {
  return (
    <section className="flex flex-col h-[386px] shrink-0">
      <DockTitle>Selain</DockTitle>
      <div className="h-[31px] shrink-0 flex items-center pl-[7px] pr-1 pb-1">
        <button type="button" aria-label="add" className="mr-[10px]"><Icon name="addSelected" className="size-4" /></button>
        <button type="button" aria-label="refresh"><Icon name="refresh" className="size-4" /></button>
        <button type="button" aria-label="more" className="ml-auto pb-1 text-[16px] leading-4 text-[#444]">»</button>
      </div>
      <div className="flex-1 min-h-0 flex flex-col border border-[#b8b8b8] bg-white">
        <div className="flex-1 min-h-0 flex">
          <ul className="flex-1 min-w-0 overflow-hidden pt-px">
            {BROWSER.map(row => (
              <li key={row.label} className={`h-[18px] flex items-center whitespace-nowrap text-[11px] leading-4 ${row.child ? 'pl-5' : 'pl-1'}`}>
                <span className="w-[15px] flex shrink-0">{(row.arrow || row.open) && <TreeArrow open={row.open} />}</span>
                <Icon name={row.icon} className="size-4 mr-[6px]" />
                {row.label}
              </li>
            ))}
          </ul>
          <div className="w-[14px] shrink-0 flex flex-col border-l border-[#b8b8b8] bg-[#e6e6e6]">
            <ScrollArrow label="up" d="M0 6h8L4 2z" className="h-[14px] border-b" />
            <div className="h-[184px] bg-linear-to-r from-white to-[#f2f2f2] border-b border-[#b8b8b8]" />
            <ScrollArrow label="down" d="M0 2h8L4 6z" className="h-[14px] border-t mt-auto" />
          </div>
        </div>
        <div className="h-[14px] shrink-0 flex border-t border-[#b8b8b8] bg-[#e2e2e2]">
          <ScrollArrow label="left" d="M6 0v8L2 4z" className="w-[14px] border-r" />
          <div className="w-[27px] bg-[#fafafa] border-r border-[#b8b8b8]" />
          <ScrollArrow label="right" d="M2 0v8l4-4z" className="w-[14px] border-x ml-auto" />
          <div className="w-[13px] bg-[#efefef]" />
        </div>
      </div>
    </section>
  )
}

function LayersPanel() {
  return (
    <section className="flex-1 min-h-0 flex flex-col">
      <DockTitle>Tasot</DockTitle>
      <div className="h-[31px] shrink-0 flex items-center pl-1 pr-1 pb-1">
        <button type="button" aria-label="style" className="w-6 h-[23px] mr-[5px] flex items-center justify-center rounded-sm bg-[#dcdcdc] border border-[#b0b0b0]">
          <Icon name="brush" className="size-4" />
        </button>
        <button type="button" aria-label="group"><Icon name="addGroup" className="size-4" /></button>
        <button type="button" aria-label="more" className="ml-auto pb-1 text-[16px] leading-4 text-[#444]">»</button>
      </div>
      <div className="flex-1 border border-b-0 border-[#b8b8b8] bg-white" />
    </section>
  )
}

function Processing() {
  return (
    <section className="flex-1 min-h-0 flex flex-col">
      <DockTitle clipped>Prosessointityökalut</DockTitle>
      <div className="h-[31px] shrink-0 flex items-center gap-2 pl-2 pb-1">
        <button type="button" aria-label="models"><Icon name="models" className="size-4" /></button>
        <button type="button" aria-label="python" className="ml-px"><Icon name="pythonSmall" className="size-4" /></button>
        <button type="button" aria-label="history"><Icon name="clockGrey" className="size-4" /></button>
        <button type="button" aria-label="results"><Icon name="results" className="size-4" /></button>
        <div className="w-px h-3 bg-[#ccc]" />
        <button type="button" aria-label="edit in place"><Icon name="editInPlace" className="size-4" /></button>
        <div className="w-px h-3 bg-[#ccc]" />
        <button type="button" aria-label="options"><Icon name="wrench" className="size-4" /></button>
      </div>
      <label className="h-[22px] shrink-0 flex items-center gap-2 pl-2 bg-white border border-r-0 border-[#a8a8a8] rounded-l-sm">
        <svg viewBox="0 0 13 13" className="w-[13px] h-[13px]" fill="none" stroke="#888" strokeWidth="1.3">
          <circle cx="5" cy="5" r="4.3" />
          <path d="M8 8l4.500 4.500" />
        </svg>
        <input aria-label="Etsi" placeholder="Etsi…" className="flex-1 min-w-0 text-[10px] leading-4 outline-none placeholder:text-[#777]" />
      </label>
      <div className="flex-1 min-h-0 flex bg-white border-t border-l border-[#b0b0b0]">
        <ul className="flex-1 overflow-hidden pt-px">
          {['Viimeksi käytetyt', ...ALGORITHMS].map((name, i) => (
            <li key={name} className="h-[18px] flex items-center pl-[6px] text-[11px] leading-4 whitespace-nowrap">
              <span className="w-[17px] flex"><TreeArrow /></span>
              <Icon name={i === 0 ? 'clockGrey' : 'q'} className="size-4 mr-[6px]" />
              {name}
            </li>
          ))}
        </ul>
        <div className="w-[10px] overflow-hidden flex flex-col border-l border-[#b8b8b8] bg-[#e6e6e6]">
          <ScrollArrow label="up" d="M0 6h8L4 2z" className="h-[14px] w-[13px] border-b" />
          <div className="h-[137px] bg-linear-to-r from-white to-[#f2f2f2] border-b border-[#b8b8b8]" />
        </div>
      </div>
    </section>
  )
}

export default function App() {
  return (
    <div className="h-screen flex flex-col overflow-hidden bg-[#efefef] text-black font-['Open_Sans','Noto_Sans',sans-serif]">
      <nav className="h-[11px] shrink-0 flex items-end gap-[15px] overflow-hidden pb-px border-b border-[#d0d0d0] text-[11px] leading-4">
        {MENU.map(([before, key, after], i) => (
          <button key={i} type="button" className="shrink-0">{before}<u className="underline-offset-2">{key}</u>{after}</button>
        ))}
      </nav>

      {TOOLBARS.map((items, i) => (
        <div key={i} role="toolbar" className="h-[39px] shrink-0 flex items-center pl-[2px] bg-linear-to-b from-[#fafafa] to-[#ededed] border-b border-[#b8b8b8]">
          {items.map((item, j) => <ToolButton key={j} item={item} />)}
        </div>
      ))}

      <main className="flex-1 min-h-0 flex">
        <div role="toolbar" className="w-[42px] shrink-0 flex flex-col bg-linear-to-r from-[#fafafa] to-[#ebebeb] border-r border-[#b8b8b8] pt-1">
          <svg viewBox="0 0 17 4" className="ml-[9px] mb-1 w-[17px] h-1 shrink-0" stroke="#a8a8a8" strokeDasharray="1 2">
            <path d="M0 .5h17M0 3.5h17" />
          </svg>
          {SIDE_TOOLS.map(item => {
            const name = item.replace('+', '')
            return (
              <div key={item} className="h-8 shrink-0 flex items-center">
                <button type="button" aria-label={name} className="w-[22px] overflow-hidden flex justify-end"><Icon name={name} /></button>
                {item.endsWith('+') && (
                  <button type="button" aria-label={`${name} menu`} className="ml-[7px] h-6 flex items-center"><Caret /></button>
                )}
              </div>
            )
          })}
        </div>

        <div className="w-[92px] shrink-0 flex flex-col">
          <BrowserPanel />
          <div className="h-[6px] shrink-0 flex justify-center items-center"><SplitGrip /></div>
          <LayersPanel />
        </div>
        <div className="w-[6px] shrink-0 flex justify-center pt-[380px]"><SplitGrip vertical /></div>

        <div className="flex-1 min-w-0 relative bg-[#fefefe] border border-b-0 border-[#b8b8b8]">
          <svg viewBox="0 0 24 24" className="absolute left-[55%] top-[37%] size-6"><Hand /></svg>
        </div>

        <div className="w-[6px] shrink-0 flex justify-center pt-[380px]"><SplitGrip vertical /></div>
        <div className="w-[496px] shrink-0 flex flex-col">
          <section className="h-[411px] shrink-0 flex flex-col">
            <DockTitle clipped>Tason tyylit</DockTitle>
            <div className="flex-1 flex items-center justify-center pl-1 pb-1 text-[10px] leading-4">Ei tuettu tai ei taso</div>
            <div className="h-[22px] shrink-0 flex items-start text-[10px] leading-4">
              <button type="button" className="w-[69px] h-5 bg-[#dcdddc] border border-[#b8b8b8]">Lokiviestit</button>
              <button type="button" className="w-[74px] h-[22px] bg-linear-to-b from-[#efefef] to-white border border-t-0 border-l-0 border-[#b8b8b8] rounded-b-sm">Tason tyylit</button>
              <div className="flex-1 border-t border-[#b8b8b8]" />
            </div>
          </section>
          <div className="h-[6px] shrink-0 flex justify-center items-center pl-2"><SplitGrip /></div>
          <Processing />
        </div>
      </main>
    </div>
  )
}
